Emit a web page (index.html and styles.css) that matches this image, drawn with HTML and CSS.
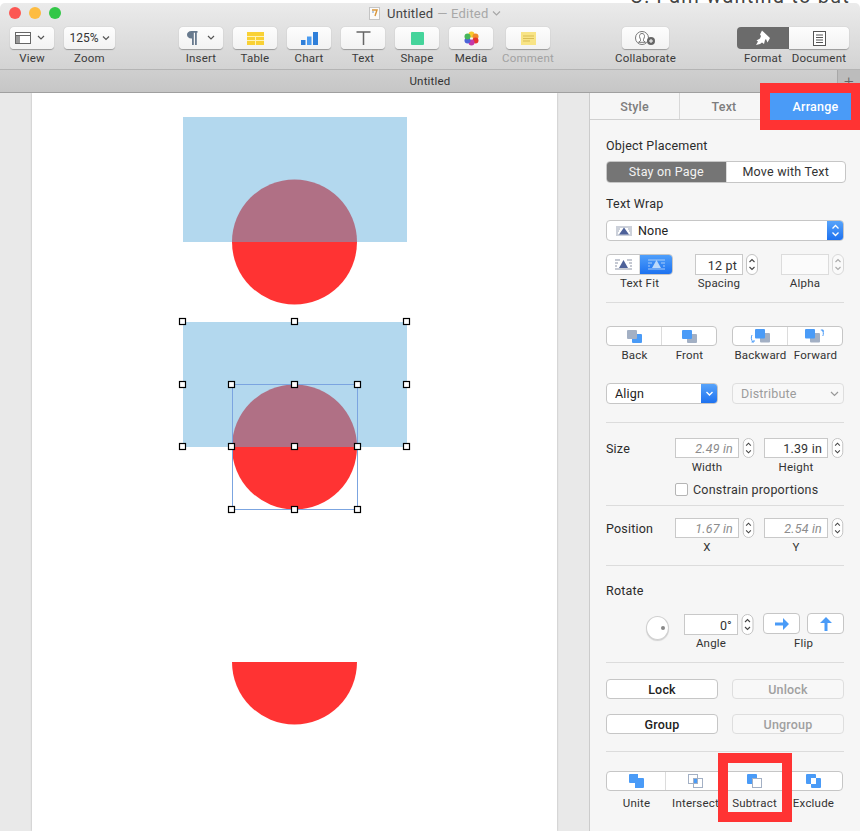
FILE: index.html
```html
<!DOCTYPE html>
<html lang="en">
<head>
    <meta charset="UTF-8">
    <meta name="viewport" content="width=device-width, initial-scale=1.0">
    <title>Untitled</title>
    <link rel="stylesheet" href="styles.css">
</head>
<body>
    <!-- shared little icons -->
    <svg class="defs" width="0" height="0">
        <symbol id="stepper" viewBox="0 0 12 21">
            <rect x="0.5" y="0.5" width="11" height="20" rx="5.5" fill="#fff" stroke="#c2c2c2"/>
            <path d="M3.5 8 6 5.5 8.5 8M3.5 13 6 15.5 8.5 13" fill="none" stroke="#444" stroke-width="1.1"/>
        </symbol>
        <symbol id="stepper-off" viewBox="0 0 12 21">
            <rect x="0.5" y="0.5" width="11" height="20" rx="5.5" fill="#fafafa" stroke="#d8d8d8"/>
            <path d="M3.5 8 6 5.5 8.5 8M3.5 13 6 15.5 8.5 13" fill="none" stroke="#aaa" stroke-width="1.1"/>
        </symbol>
        <symbol id="updown" viewBox="0 0 17 21">
            <path d="M5.5 8.5 8.5 5.5 11.5 8.5M5.5 12.5 8.5 15.5 11.5 12.5" fill="none" stroke="#fff" stroke-width="1.3"/>
        </symbol>
    </svg>

    <div class="desktop"><span>U: I am wanting to but</span></div>

    <header class="window-top">
        <div class="title-row">
            <span class="light red"></span>
            <span class="light yellow"></span>
            <span class="light green"></span>
            <div class="doc-title">
                <svg width="11" height="13" viewBox="0 0 11 13"><rect x="0.5" y="0.5" width="10" height="12" fill="#fbfbfb" stroke="#c4c4c4"/><path d="M3 3h5L6 9" fill="none" stroke="#d8963c" stroke-width="1.4"/><path d="M3 5h2" stroke="#7a9cc0"/></svg>
                <span class="doc-name">Untitled</span>
                <span class="doc-state">— Edited</span>
                <svg width="9" height="5" viewBox="0 0 9 5"><path d="M1 0.5 4.5 4 8 0.5" fill="none" stroke="#a6a6a6" stroke-width="1.1"/></svg>
            </div>
        </div>

        <div class="tools">
            <div class="tool w44">
                <button class="tool-btn">
                    <svg width="34" height="14" viewBox="0 0 34 14"><rect x="0.5" y="1.5" width="15" height="11" fill="#fff" stroke="#666"/><path d="M0.5 4.5h15" stroke="#666"/><rect x="1" y="5" width="4" height="7" fill="#999"/><path d="M23 5 26 8 29 5" fill="none" stroke="#555" stroke-width="1.2"/></svg>
                </button>
                <span>View</span>
            </div>
            <div class="tool w51 ml10">
                <button class="tool-btn zoom-btn">125%<svg width="8" height="5" viewBox="0 0 8 5"><path d="M1 0.5 4 3.5 7 0.5" fill="none" stroke="#555" stroke-width="1.2"/></svg></button>
                <span>Zoom</span>
            </div>
            <div class="tool w44 ml64">
                <button class="tool-btn">
                    <svg width="28" height="14" viewBox="0 0 28 14"><path d="M10.500 0H4.500C1.500 0 0 1.800 0 3.800s1.500 3.700 4.500 3.700H5V14h1.800V1.800H8V14h1.800V1.800h.7z" fill="#687a8e"/><path d="M21 5 24 8 27 5" fill="none" stroke="#555" stroke-width="1.2"/></svg>
                </button>
                <span>Insert</span>
            </div>
            <div class="tool w44 ml10">
                <button class="tool-btn">
                    <svg width="17" height="13" viewBox="0 0 17 13"><rect width="17" height="13" fill="#f9d135"/><path d="M0 4.500h17M0 8.500h17M8.500 4v9" stroke="#fff3b5"/></svg>
                </button>
                <span>Table</span>
            </div>
            <div class="tool w44 ml10">
                <button class="tool-btn">
                    <svg width="17" height="13" viewBox="0 0 17 13"><rect y="8" width="4.500" height="5" fill="#2f7fd9"/><rect x="6" y="4.500" width="4.500" height="8.500" fill="#4a9bf0"/><rect x="12" y="0" width="5" height="13" fill="#2f7fd9"/></svg>
                </button>
                <span>Chart</span>
            </div>
            <div class="tool w44 ml10">
                <button class="tool-btn">
                    <svg width="15" height="14" viewBox="0 0 15 14"><path d="M0.500 1h14M7.500 1v13" fill="none" stroke="#666" stroke-width="1.500"/></svg>
                </button>
                <span>Text</span>
            </div>
            <div class="tool w44 ml10">
                <button class="tool-btn">
                    <svg width="13" height="13" viewBox="0 0 13 13"><rect width="13" height="13" rx="1" fill="#45d49b"/></svg>
                </button>
                <span>Shape</span>
            </div>
            <div class="tool w44 ml10">
                <button class="tool-btn">
                    <svg width="15" height="15" viewBox="0 0 15 15">
                        <circle cx="7.500" cy="3.500" r="3" fill="#f7c92e"/>
                        <circle cx="11.500" cy="5.500" r="3" fill="#f08a2c"/>
                        <circle cx="11.500" cy="9.500" r="3" fill="#e5352f"/>
                        <circle cx="7.500" cy="11.500" r="3" fill="#c638a8"/>
                        <circle cx="3.500" cy="9.500" r="3" fill="#4c63d8"/>
                        <circle cx="3.500" cy="5.500" r="3" fill="#47b65a"/>
                    </svg>
                </button>
                <span>Media</span>
            </div>
            <div class="tool w44 ml13 tool-off">
                <button class="tool-btn">
                    <svg width="15" height="13" viewBox="0 0 15 13"><rect width="15" height="13" fill="#f8e486"/><path d="M2 4h11M2 6.500h11M2 9h7" stroke="#d9bd55"/></svg>
                </button>
                <span>Comment</span>
            </div>
            <div class="tool w47 ml72">
                <button class="tool-btn">
                    <svg width="22" height="15" viewBox="0 0 22 15"><circle cx="7" cy="7" r="6.500" fill="#fff" stroke="#777"/><path d="M7 2.500c1.800 0 2.500 1.300 2.500 2.800 0 1.300-.7 2.300-1 3v1.500l2 1.500H3.500l2-1.500V8.300c-.3-.7-1-1.700-1-3C4.500 3.800 5.200 2.500 7 2.500z" fill="none" stroke="#777"/><circle cx="16" cy="10" r="4" fill="#666"/><path d="M16 8v4M14 10h4" stroke="#fff"/></svg>
                </button>
                <span>Collaborate</span>
            </div>
            <div class="tool w52 ml68">
                <button class="tool-btn seg-left dark">
                    <svg width="16" height="16" viewBox="0 0 16 16"><path d="M7 0.500 15 8l-2.500 4.500-1.500-3.500-1 1-1 4-2-1.500L5 14 1 15l2-3.500-1.500-1 3.500-2 1-2.500L5 4.500z" fill="#fff"/></svg>
                </button>
                <span>Format</span>
            </div>
            <div class="tool w60">
                <button class="tool-btn seg-right">
                    <svg width="13" height="15" viewBox="0 0 13 15"><rect x="0.500" y="0.500" width="12" height="14" fill="#fff" stroke="#555"/><path d="M3 4h7M3 6.500h7M3 9h7M3 11.500h7" stroke="#555"/></svg>
                </button>
                <span>Document</span>
            </div>
        </div>
    </header>

    <div class="tab-title">
        <span>Untitled</span>
        <div class="add-tab">+</div>
    </div>

    <div class="main">
        <div class="canvas">
            <!-- viewBox uses window coords so the shapes are easy to place -->
            <svg class="page" width="525" height="738" viewBox="32 93 525 738">
                <rect x="183" y="117" width="224" height="125" fill="#b3d8ee"/>
                <path d="M232 242a62.500 62.500 0 0 1 125 0z" fill="#b07085"/>
                <path d="M232 242a62.500 62.500 0 0 0 125 0z" fill="#ff3333"/>

                <rect x="183" y="322" width="224" height="125" fill="#b3d8ee"/>
                <path d="M232 447a62.500 62.500 0 0 1 125 0z" fill="#b07085"/>
                <path d="M232 447a62.500 62.500 0 0 0 125 0z" fill="#ff3333"/>
                <rect x="232.500" y="384.500" width="125" height="125" fill="none" stroke="#7ba4e0"/>

                <g fill="#fff" stroke="#000" stroke-width="1.200">
                    <rect x="179.500" y="318.500" width="6" height="6"/>
                    <rect x="291.500" y="318.500" width="6" height="6"/>
                    <rect x="403.500" y="318.500" width="6" height="6"/>
                    <rect x="179.500" y="381.500" width="6" height="6"/>
                    <rect x="403.500" y="381.500" width="6" height="6"/>
                    <rect x="179.500" y="443.500" width="6" height="6"/>
                    <rect x="403.500" y="443.500" width="6" height="6"/>
                    <rect x="228.500" y="381.500" width="6" height="6"/>
                    <rect x="291.500" y="381.500" width="6" height="6"/>
                    <rect x="354.500" y="381.500" width="6" height="6"/>
                    <rect x="228.500" y="443.500" width="6" height="6"/>
                    <rect x="291.500" y="443.500" width="6" height="6"/>
                    <rect x="354.500" y="443.500" width="6" height="6"/>
                    <rect x="228.500" y="506.500" width="6" height="6"/>
                    <rect x="291.500" y="506.500" width="6" height="6"/>
                    <rect x="354.500" y="506.500" width="6" height="6"/>
                </g>

                <path d="M232 662a62.500 62.500 0 0 0 125 0z" fill="#ff3333"/>
            </svg>
        </div>

        <aside class="sidebar">
            <div class="tabs">
                <div class="tab tab-style">Style</div>
                <div class="tab tab-text">Text</div>
                <div class="tab active">Arrange</div>
            </div>

            <section class="sec sec-place">
                <h3>Object Placement</h3>
                <div class="seg seg-place">
                    <div class="seg-item on-dark">Stay on Page</div>
                    <div class="seg-item">Move with Text</div>
                </div>
                <h3 class="wrap-title">Text Wrap</h3>
                <div class="select wrap-select">
                    <svg width="16" height="10" viewBox="0 0 16 10"><path d="M0 1h16M0 9h16M0 3h4M12 3h4M0 5h3M13 5h3M0 7h2M14 7h2" stroke="#9aa3b5"/><path d="M8 1.500 13 8.500H3z" fill="#4d6199"/></svg>
                    <span>None</span>
                    <div class="select-arrow"><svg width="17" height="21"><use href="#updown"/></svg></div>
                </div>
                <div class="row fit-row">
                    <div class="field fit-field">
                        <div class="seg seg-fit">
                            <div class="seg-item">
                                <svg width="17" height="11" viewBox="0 0 17 11"><path d="M0 1h5M12 1h5M0 4h3M14 4h3M0 7h2M15 7h2M0 10h17" stroke="#8b93a6"/><path d="M8.500 1 13 9H4z" fill="#4d6199"/></svg>
                            </div>
                            <div class="seg-item on-blue">
                                <svg width="17" height="11" viewBox="0 0 17 11"><path d="M0 1h17M0 4h4M13 4h4M0 7h2M15 7h2M0 10h17" stroke="#a9cdf8"/><path d="M8.500 1 13 9H4z" fill="#bcd9fa"/></svg>
                            </div>
                        </div>
                        <label>Text Fit</label>
                    </div>
                    <div class="field spacing-field">
                        <div class="input-row">
                            <div class="input w48">12 pt</div>
                            <svg class="step" width="12" height="21"><use href="#stepper"/></svg>
                        </div>
                        <label class="w48">Spacing</label>
                    </div>
                    <div class="field alpha-field">
                        <div class="input-row">
                            <div class="input w48 input-off"></div>
                            <svg class="step" width="12" height="21"><use href="#stepper-off"/></svg>
                        </div>
                        <label class="w48">Alpha</label>
                    </div>
                </div>
            </section>

            <section class="sec sec-order">
                <div class="row">
                    <div class="field">
                        <div class="seg seg-order">
                            <div class="seg-item">
                                <svg width="15" height="13" viewBox="0 0 15 13"><rect x="5" y="4" width="10" height="9" rx="1" fill="#4a9bf7"/><rect width="10" height="9" rx="1" fill="#a3b0c4"/></svg>
                            </div>
                            <div class="seg-item">
                                <svg width="15" height="13" viewBox="0 0 15 13"><rect x="5" y="4" width="10" height="9" rx="1" fill="#a3b0c4"/><rect width="10" height="9" rx="1" fill="#4a9bf7"/></svg>
                            </div>
                        </div>
                        <div class="seg-labels seg-order"><label>Back</label><label>Front</label></div>
                    </div>
                    <div class="field order-right">
                        <div class="seg seg-order">
                            <div class="seg-item">
                                <svg width="20" height="14" viewBox="0 0 20 14"><rect x="10" y="4" width="10" height="9.500" rx="1" fill="#a3b0c4"/><rect x="5" y="0" width="10" height="9.500" rx="1" fill="#4a9bf7"/><path d="M2 6C.8 8.500 1.200 11 3 13M1.500 13H4V11" fill="none" stroke="#4a9bf7"/></svg>
                            </div>
                            <div class="seg-item">
                                <svg width="20" height="14" viewBox="0 0 20 14"><rect x="5" y="4" width="10" height="9.500" rx="1" fill="#a3b0c4"/><rect y="0" width="10" height="9.500" rx="1" fill="#4a9bf7"/><path d="M17 1c1.500 1.500 1.800 4 .8 6M15.800 1H18.200V3" fill="none" stroke="#4a9bf7"/></svg>
                            </div>
                        </div>
                        <div class="seg-labels seg-order"><label>Backward</label><label>Forward</label></div>
                    </div>
                </div>
                <div class="row align-row">
                    <div class="select w112">
                        <span class="align-text">Align</span>
                        <div class="select-arrow">
                            <svg width="17" height="21" viewBox="0 0 17 21"><path d="M5.500 9 8.500 12 11.500 9" fill="none" stroke="#fff" stroke-width="1.400"/></svg>
                        </div>
                    </div>
                    <div class="select w112 select-off">
                        <span class="align-text">Distribute</span>
                        <svg class="off-arrow" width="9" height="6" viewBox="0 0 9 6"><path d="M1 1 4.500 4.500 8 1" fill="none" stroke="#999" stroke-width="1.200"/></svg>
                    </div>
                </div>
            </section>

            <section class="sec sec-size">
                <div class="row">
                    <h3 class="side-title">Size</h3>
                    <div class="field">
                        <div class="input-row">
                            <div class="input w64 input-mixed">2.49 in</div>
                            <svg class="step" width="13" height="21"><use href="#stepper"/></svg>
                        </div>
                        <label class="w64">Width</label>
                    </div>
                    <div class="field dim-right">
                        <div class="input-row">
                            <div class="input w64">1.39 in</div>
                            <svg class="step" width="13" height="21"><use href="#stepper"/></svg>
                        </div>
                        <label class="w64">Height</label>
                    </div>
                </div>
                <div class="check-row">
                    <span class="checkbox"></span>
                    <span>Constrain proportions</span>
                </div>
            </section>

            <section class="sec sec-pos">
                <div class="row">
                    <h3 class="side-title">Position</h3>
                    <div class="field">
                        <div class="input-row">
                            <div class="input w64 input-mixed">1.67 in</div>
                            <svg class="step" width="13" height="21"><use href="#stepper"/></svg>
                        </div>
                        <label class="w64">X</label>
                    </div>
                    <div class="field dim-right">
                        <div class="input-row">
                            <div class="input w64 input-mixed">2.54 in</div>
                            <svg class="step" width="13" height="21"><use href="#stepper"/></svg>
                        </div>
                        <label class="w64">Y</label>
                    </div>
                </div>
            </section>

            <section class="sec sec-rotate">
                <h3>Rotate</h3>
                <div class="row rotate-row">
                    <div class="dial"><span></span></div>
                    <div class="field angle-field">
                        <div class="input-row">
                            <div class="input w54">0°</div>
                            <svg class="step" width="13" height="21"><use href="#stepper"/></svg>
                        </div>
                        <label class="w54">Angle</label>
                    </div>
                    <div class="field flip-field">
                        <div class="flip-btns">
                            <button class="flip-btn">
                                <svg width="14" height="12" viewBox="0 0 14 12"><path d="M0 4.500h8V0l6 6-6 6V7.500H0z" fill="#4a9bf7"/></svg>
                            </button>
                            <button class="flip-btn">
                                <svg width="12" height="14" viewBox="0 0 12 14"><path d="M4.500 14V6H0l6-6 6 6H7.500v8z" fill="#4a9bf7"/></svg>
                            </button>
                        </div>
                        <label>Flip</label>
                    </div>
                </div>
            </section>

            <section class="sec sec-lock">
                <div class="row btn-row">
                    <button class="btn">Lock</button>
                    <button class="btn btn-off">Unlock</button>
                </div>
                <div class="row btn-row group-row">
                    <button class="btn">Group</button>
                    <button class="btn btn-off">Ungroup</button>
                </div>
            </section>

            <section class="sec sec-bool">
                <div class="seg seg-bool">
                    <div class="seg-item">
                        <svg width="15" height="14" viewBox="0 0 15 14"><path d="M1 0h8v4h5a1 1 0 0 1 1 1v8a1 1 0 0 1-1 1H6V9H1a1 1 0 0 1-1-1V1a1 1 0 0 1 1-1z" fill="#4a9bf7"/></svg>
                    </div>
                    <div class="seg-item">
                        <svg width="15" height="14" viewBox="0 0 15 14"><rect x="0.500" y="0.500" width="9" height="9" fill="#fff" stroke="#a3b0c4"/><rect x="5.500" y="4.500" width="9" height="9" fill="none" stroke="#a3b0c4"/><rect x="6" y="5" width="3" height="4" fill="#4a9bf7"/></svg>
                    </div>
                    <div class="seg-item">
                        <svg width="15" height="14" viewBox="0 0 15 14"><rect width="10" height="10" rx="1" fill="#4a9bf7"/><rect x="5.500" y="4.500" width="9" height="9" fill="#fff" stroke="#a3b0c4"/></svg>
                    </div>
                    <div class="seg-item">
                        <svg width="15" height="14" viewBox="0 0 15 14"><rect width="10" height="10" rx="1" fill="#4a9bf7"/><rect x="5" y="4" width="10" height="10" rx="1" fill="#4a9bf7"/><rect x="5" y="4" width="5" height="6" fill="#fff"/></svg>
                    </div>
                </div>
                <div class="seg-labels seg-bool">
                    <label>Unite</label><label>Intersect</label><label>Subtract</label><label>Exclude</label>
                </div>
            </section>
        </aside>
    </div>

    <!-- red callouts drawn over the screenshot -->
    <div class="mark mark-arrange"></div>
    <div class="mark mark-subtract"></div>
</body>
</html>
```

FILE: styles.css
```css
* {
    box-sizing: border-box;
}
body {
    margin: 0;
    width: 860px;
    height: 831px;
    overflow: hidden;
    position: relative;
    display: flex;
    flex-direction: column;
    font-family: Roboto, "Liberation Sans", sans-serif;
    font-size: 12px;
    color: #2b2b2b;
    background: #fff;
}
h3 {
    margin: 0;
    font-size: 12.5px;
    font-weight: 400;
    line-height: 14px;
    color: #2b2b2b;
    letter-spacing: 0.2px;
}
button {
    font-family: inherit;
}
label {
    display: block;
    font-size: 11.5px;
    line-height: 14px;
    text-align: center;
    color: #333;
    letter-spacing: 0.2px;
    white-space: nowrap;
}
.defs {
    position: absolute;
}

.desktop {
    height: 3px;
    overflow: hidden;
    position: relative;
    background: #fff;
}
.desktop span {
    position: absolute;
    left: 630px;
    top: -14px;
    font-size: 20px;
    line-height: 20px;
    letter-spacing: 1.2px;
    color: #444;
}

/* window chrome */
.window-top {
    height: 66px;
    background: linear-gradient(#ebebeb, #d3d3d3);
    border-radius: 5px 5px 0 0;
}
.title-row {
    height: 24px;
    display: flex;
    align-items: center;
    padding-left: 9px;
    padding-bottom: 4px;
}
.light {
    width: 12px;
    height: 12px;
    border-radius: 50%;
    margin-right: 8px;
}
.light.red { background: #fc5753; }
.light.yellow { background: #fdbc40; }
.light.green { background: #33c748; }
.doc-title {
    display: flex;
    align-items: center;
    margin-left: 300px;
    font-size: 13px;
    letter-spacing: 0.2px;
}
.doc-name {
    margin-left: 7px;
    color: #444;
}
.doc-state {
    margin-left: 4px;
    margin-right: 4px;
    color: #a8a8a8;
}
.tools {
    display: flex;
    padding-left: 10px;
}
.tool {
    display: flex;
    flex-direction: column;
    align-items: center;
}
.tool span {
    font-size: 11.5px;
    line-height: 14px;
    margin-top: 2px;
    color: #3a3a3a;
    white-space: nowrap;
    letter-spacing: 0.2px;
}
.tool-off span {
    color: #a2a2a2;
}
.tool-btn {
    width: 100%;
    height: 22px;
    padding: 0;
    display: flex;
    align-items: center;
    justify-content: center;
    background: linear-gradient(#fdfdfd, #f2f2f2);
    border: none;
    border-radius: 4px;
    box-shadow: 0 0.5px 1px rgba(0, 0, 0, 0.3);
}
.zoom-btn {
    gap: 3px;
    font-size: 12px;
    color: #333;
}
.seg-left { border-radius: 4px 0 0 4px; }
.seg-right { border-radius: 0 4px 4px 0; }
.dark {
    background: #6b6b6b;
    box-shadow: none;
}
.w44 { width: 44px; }
.w47 { width: 47px; }
.w51 { width: 51px; }
.w52 { width: 52px; }
.w60 { width: 60px; }
.ml10 { margin-left: 10px; }
.ml13 { margin-left: 13px; }
.ml64 { margin-left: 64px; }
.ml68 { margin-left: 68px; }
.ml72 { margin-left: 72px; }

.tab-title {
    height: 24px;
    display: flex;
    align-items: center;
    justify-content: center;
    position: relative;
    background: linear-gradient(#cfcfcf, #c6c6c6);
    border-top: 1px solid #b4b4b4;
    border-bottom: 1px solid #a0a0a0;
    font-size: 11.5px;
    color: #333;
    letter-spacing: 0.2px;
}
.add-tab {
    position: absolute;
    left: 837px;
    right: 0;
    top: 0;
    bottom: 0;
    border-left: 1px solid #a8a8a8;
    background: #bcbcbc;
    font-size: 17px;
    font-weight: 300;
    line-height: 22px;
    text-align: center;
    color: #666;
}

/* document area */
.main {
    flex: 1;
    display: flex;
    min-height: 0;
}
.canvas {
    width: 591px;
    padding-left: 32px;
    background: #e9e9e9;
    border-left: 1px solid #bbb;
    margin-left: -1px;
    border-right: 1px solid #ccc;
}
.page {
    display: block;
    background: #fff;
    box-shadow: 0 0 2px rgba(0, 0, 0, 0.25);
}

/* inspector */
.sidebar {
    width: 270px;
    background: #f6f6f6;
    position: relative;
}
.tabs {
    height: 27px;
    display: flex;
    border-bottom: 1px solid #d0d0d0;
}
.tab {
    display: flex;
    align-items: center;
    justify-content: center;
    font-size: 12.5px;
    font-weight: 500;
    color: #7d7d7d;
    letter-spacing: 0.2px;
}
.tab-style {
    width: 90px;
    border-right: 1px solid #d8d8d8;
}
.tab-text {
    width: 90px;
    padding-right: 2px;
}
.tab.active {
    width: 81px;
    margin-bottom: -1px;
    padding-left: 10px;
    background: #4a9bf7;
    color: #fff;
}
.sec {
    margin: 0 16px;
    border-bottom: 1px solid #dcdcdc;
}
.sec:last-child {
    border-bottom: none;
}
.row {
    display: flex;
}
.field {
    display: flex;
    flex-direction: column;
}
.field label {
    margin-top: 1px;
}
.input-row {
    display: flex;
    align-items: flex-start;
    gap: 3px;
}
.input {
    height: 21px;
    padding-right: 5px;
    background: #fff;
    border: 1px solid #c9c9c9;
    font-size: 12.5px;
    line-height: 21px;
    text-align: right;
    color: #333;
    letter-spacing: 0.2px;
}
.input-off {
    background: #fbfbfb;
    border-color: #dcdcdc;
}
.input-mixed {
    font-style: italic;
    color: #8c8c8c;
}
.w48 { width: 48px; }
.w54 { width: 54px; }
.w64 { width: 64px; }
.w112 { width: 112px; }
.step {
    display: block;
}

.seg {
    display: flex;
    background: #fff;
    border: 1px solid #c6c6c6;
    border-radius: 4px;
    overflow: hidden;
}
.seg-item {
    flex: 1;
    display: flex;
    align-items: center;
    justify-content: center;
    border-left: 1px solid #dcdcdc;
    font-size: 12.5px;
    color: #333;
    letter-spacing: 0.2px;
}
.seg-item:first-child {
    border-left: none;
}
.on-dark {
    background: #757575;
    color: #f2f2f2;
}
.on-blue {
    background: linear-gradient(#4f9ffb, #1d72f0);
}
.seg-labels {
    display: flex;
    padding-left: 1px;
    background: none;
    border: none;
}
.seg-labels label {
    flex: 1;
}

.select {
    height: 21px;
    display: flex;
    align-items: center;
    position: relative;
    background: #fff;
    border: 1px solid #c6c6c6;
    border-radius: 4px;
    font-size: 12.5px;
    letter-spacing: 0.2px;
    color: #222;
    overflow: hidden;
}
.select-arrow {
    position: absolute;
    top: -1px;
    right: -1px;
    bottom: -1px;
    width: 17px;
    background: linear-gradient(#5aa6fb, #1b6fef);
}
.select-arrow svg {
    display: block;
}
.select-off {
    background: #f8f8f8;
    border-color: #dedede;
    color: #9c9c9c;
}
.off-arrow {
    position: absolute;
    right: 4px;
    top: 7px;
}

/* object placement */
.sec-place {
    height: 183px;
    padding-top: 19px;
}
.seg-place {
    width: 240px;
    height: 22px;
    margin-top: 8px;
}
.seg-place .seg-item {
    padding-bottom: 1px;
}
.wrap-title {
    margin-top: 14px;
}
.wrap-select {
    margin-top: 9px;
    width: 238px;
    padding-left: 9px;
}
.wrap-select span {
    margin-left: 6px;
}
.fit-row {
    margin-top: 13px;
}
.seg-fit {
    width: 67px;
    height: 21px;
}
.spacing-field {
    margin-left: 22px;
}
.alpha-field {
    margin-left: 23px;
}

/* order */
.sec-order {
    height: 120px;
    padding-top: 23px;
}
.seg-order {
    width: 111px;
}
.seg.seg-order {
    height: 20px;
}
.order-right {
    margin-left: 15px;
}
.sec-order .field label {
    margin-top: 2px;
}
.align-row {
    margin-top: 21px;
    gap: 14px;
}
.align-text {
    margin-left: 8px;
}

/* size and position */
.side-title {
    width: 69px;
    padding-top: 4px;
}
.dim-right {
    margin-left: 9px;
}
.sec-size {
    height: 83px;
    padding-top: 15px;
}
.sec-size .input,
.sec-pos .input {
    height: 20px;
    line-height: 20px;
}
.sec-size .step,
.sec-pos .step {
    height: 20px;
}
.sec-size .field label,
.sec-pos .field label {
    margin-top: 2px;
}
.check-row {
    display: flex;
    align-items: center;
    gap: 5px;
    margin: 8px 0 0 69px;
    font-size: 12.5px;
    letter-spacing: 0.2px;
    color: #333;
}
.checkbox {
    width: 13px;
    height: 13px;
    background: #fff;
    border: 1px solid #b5b5b5;
    border-radius: 2px;
}
.sec-pos {
    height: 60px;
    padding-top: 12px;
}

/* rotate */
.sec-rotate {
    height: 97px;
    padding-top: 18px;
}
.rotate-row {
    margin-top: 15px;
    padding-left: 40px;
}
.dial {
    width: 24px;
    height: 24px;
    margin-top: 3px;
    position: relative;
    border-radius: 50%;
    background: #fff;
    border: 1px solid #d0d0d0;
    box-shadow: 0 1px 1px rgba(0, 0, 0, 0.15);
}
.dial span {
    position: absolute;
    right: 3px;
    top: 9px;
    width: 4px;
    height: 4px;
    border-radius: 50%;
    background: #888;
}
.angle-field {
    margin-left: 15px;
    padding-top: 1px;
}
.flip-field {
    margin-left: 9px;
}
.flip-field label {
    margin-top: 2px;
}
.flip-btns {
    display: flex;
    gap: 7px;
}
.flip-btn {
    width: 37px;
    height: 21px;
    padding: 0;
    display: flex;
    align-items: center;
    justify-content: center;
    background: #fff;
    border: 1px solid #c6c6c6;
    border-radius: 4px;
}

/* lock and group */
.sec-lock {
    height: 89px;
    padding-top: 16px;
}
.btn-row {
    gap: 14px;
}
.group-row {
    margin-top: 15px;
}
.btn {
    width: 112px;
    height: 20px;
    padding: 0;
    background: #fff;
    border: 1px solid #c6c6c6;
    border-radius: 4px;
    font-size: 12.5px;
    font-weight: 500;
    color: #222;
    letter-spacing: 0.2px;
}
.btn-off {
    background: #f8f8f8;
    border-color: #dedede;
    color: #a0a0a0;
}

/* boolean ops */
.sec-bool {
    padding-top: 19px;
}
.seg-bool {
    width: 237px;
}
.seg.seg-bool {
    height: 20px;
}
.seg-labels.seg-bool {
    margin-top: 5px;
}
.seg-labels.seg-bool label {
    flex: 1 0 0;
}

/* callouts */
.mark {
    position: absolute;
    border: 10px solid #ff3333;
}
.mark-arrange {
    left: 760px;
    top: 83px;
    width: 100px;
    height: 47px;
    border-right-width: 9px;
}
.mark-subtract {
    left: 718px;
    top: 753px;
    width: 74px;
    height: 69px;
}
```
